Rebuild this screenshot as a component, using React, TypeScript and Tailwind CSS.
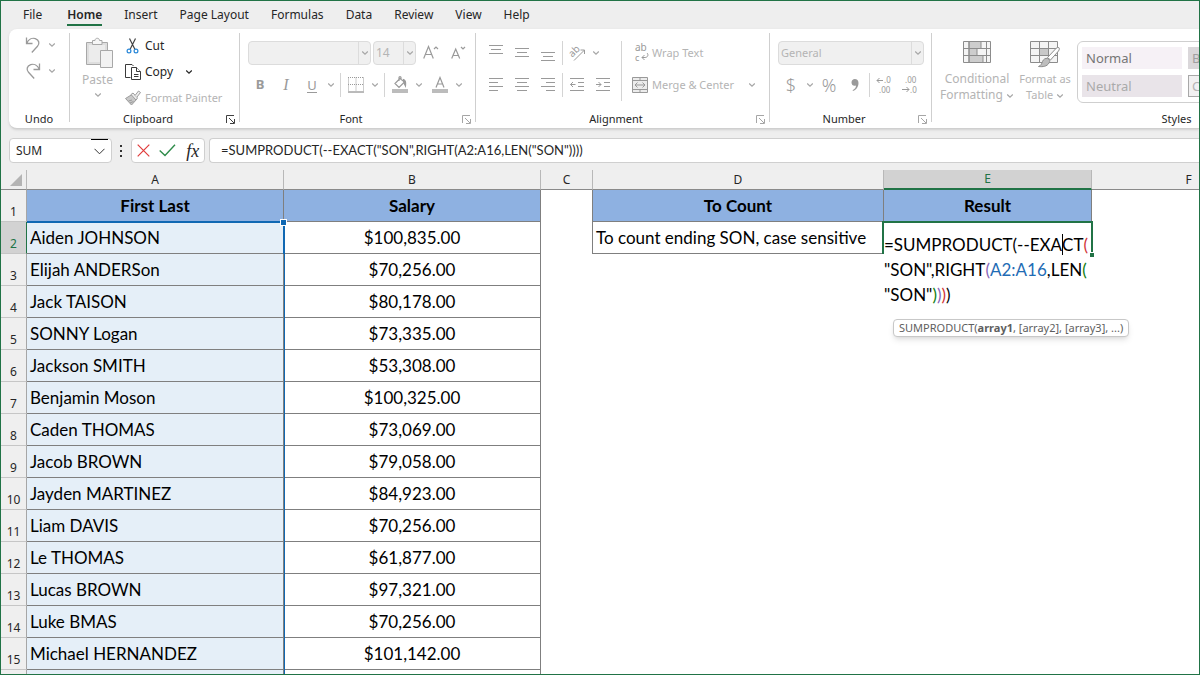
import type { ReactNode } from "react";

const tabs = ["File", "Home", "Insert", "Page Layout", "Formulas", "Data", "Review", "View", "Help"];

const people = [
  ["Aiden JOHNSON", "$100,835.00"],
  ["Elijah ANDERSon", "$70,256.00"],
  ["Jack TAISON", "$80,178.00"],
  ["SONNY Logan", "$73,335.00"],
  ["Jackson SMITH", "$53,308.00"],
  ["Benjamin Moson", "$100,325.00"],
  ["Caden THOMAS", "$73,069.00"],
  ["Jacob BROWN", "$79,058.00"],
  ["Jayden MARTINEZ", "$84,923.00"],
  ["Liam DAVIS", "$70,256.00"],
  ["Le THOMAS", "$61,877.00"],
  ["Lucas BROWN", "$97,321.00"],
  ["Luke BMAS", "$70,256.00"],
  ["Michael HERNANDEZ", "$101,142.00"],
  ["", ""],
];

const formula = '=SUMPRODUCT(--EXACT("SON",RIGHT(A2:A16,LEN("SON"))))';

function Chevron({ className = "text-[#a6a6a6]" }: { className?: string }) {
  return (
    <svg width="8" height="8" viewBox="0 0 8 8" fill="none" stroke="currentColor" strokeWidth="1.2" className={className}>
      <path d="M1.2 2.5 4 5.2l2.8-2.7" />
    </svg>
  );
}

function MoreButton({ label }: { label: string }) {
  return (
    <button aria-label={label} className="flex h-6 w-3 items-center justify-center">
      <Chevron />
    </button>
  );
}

function IconButton({ label, children }: { label: string; children: ReactNode }) {
  return (
    <button aria-label={label} className="flex h-6 w-[26px] items-center justify-center text-[#9a9a9a]">
      {children}
    </button>
  );
}

function Divider({ className = "mx-px" }: { className?: string }) {
  return <div className={`h-6 w-px bg-[#d4d4d4] ${className}`} />;
}

function Group({ title, width, launcher, children }: { title: string; width: string; launcher?: string; children: ReactNode }) {
  return (
    <section className={`flex shrink-0 flex-col pt-1 ${width}`}>
      <div className="flex h-[89px] flex-col border-r border-[#cfcfcf]">
        <div className="h-20 shrink-0">{children}</div>
        <div className={`grid shrink-0 items-center leading-3 ${launcher ? "grid-cols-[1fr_13px]" : "grid-cols-1"}`}>
          <h2 className="text-center text-[#262626]">{title}</h2>
          {launcher && (
            <button aria-label={title + " settings"} className={`w-3 ${launcher}`}>
              <svg width="9" height="9" viewBox="0 0 9 9" fill="none" stroke="currentColor">
                <path d="M.5 8V.5H8M3 3l5 5M8.5 4v4.5H4" />
              </svg>
            </button>
          )}
        </div>
      </div>
    </section>
  );
}

function Dropdown({ label, value, width }: { label: string; value: string; width: string }) {
  return (
    <div className={`relative h-6 ${width}`}>
      <select aria-label={label} disabled className="h-6 w-full appearance-none rounded border border-[#dcdcdc] bg-[#f0f0f0] pl-[2px] text-[#b4b4b4] opacity-100">
        <option>{value}</option>
      </select>
      <span className="pointer-events-none absolute top-px right-px flex h-[22px] w-3 items-center justify-center border-l border-[#dcdcdc]">
        <Chevron />
      </span>
    </div>
  );
}

function Lines({ d }: { d: string }) {
  return (
    <svg width="16" height="16" viewBox="0 0 16 16" fill="none" stroke="currentColor">
      <path d={d} />
    </svg>
  );
}

function UndoGroup() {
  return (
    <Group title="Undo" width="w-[61px]">
      <div className="flex flex-col gap-[2px] pl-[11px] text-[#a0a0a0]">
        <div className="flex">
          <IconButton label="Undo">
            <svg width="18" height="18" viewBox="0 0 18 18" fill="none" stroke="currentColor" strokeWidth="1.3">
              <path d="M2.5 1.5v6h6M2.8 7.2C4.5 3.5 8 1.5 11.3 2.6c4 1.3 4.5 5.2 2.2 7.6L7.8 16.5" />
            </svg>
          </IconButton>
          <MoreButton label="Undo history" />
        </div>
        <div className="flex">
          <IconButton label="Redo">
            <svg width="18" height="18" viewBox="0 0 18 18" fill="none" stroke="currentColor" strokeWidth="1.3">
              <path d="M15.5 1.5v6h-6M15.2 7.2C13.5 3.5 10 1.5 6.7 2.6c-4 1.3-4.5 5.2-2.2 7.6l5.7 6.3" />
            </svg>
          </IconButton>
          <MoreButton label="Redo history" />
        </div>
      </div>
    </Group>
  );
}

function ClipboardGroup() {
  return (
    <Group title="Clipboard" width="w-[170px]" launcher="text-[#404040]">
      <div className="flex">
        <button className="flex w-[55px] flex-col items-center pt-1 text-xs text-[#b4b4b4]">
          <svg width="30" height="32" viewBox="0 0 30 32" fill="#ececec" stroke="#a8a8a8" className="ml-1">
            <path d="M1.5 5.5h21v22h-21z" fill="#dedede" />
            <path d="M4 8h16v17H4z" stroke="none" />
            <path d="M7.5 7.5v-4H10c0-3 4.5-3 4.5 0h2.5v4z" fill="#f6f6f6" />
            <path d="M15.500 13.500h12v17h-12z" fill="#f2f2f2" />
          </svg>
          <span className="leading-[22px]">Paste</span>
          <Chevron />
        </button>
        <div className="flex flex-col gap-[2px] pt-px text-[#262626]">
          <button className="flex h-6 items-center gap-1 text-xs">
            <svg width="16" height="16" viewBox="0 0 16 16" fill="none" stroke="#444" strokeWidth="1.2">
              <path d="M4.5.5l5.500 11M10.500.5l-5.500 11" />
              <circle cx="4" cy="13" r="1.9" stroke="#2b88d8" />
              <circle cx="11" cy="13" r="1.9" stroke="#2b88d8" />
            </svg>
            Cut
          </button>
          <div className="flex">
            <button className="flex h-6 items-center gap-1 text-xs">
              <svg width="16" height="16" viewBox="0 0 16 16" fill="white" stroke="#3a3a3a">
                <path d="M5.5 13.5h-5v-13H7l1.500 1.500" />
                <path d="M6.5 3.5h5l4 4v8h-9z" />
                <path d="M11.5 3.5v4h4M9 10.5h4.500M9 12.500h4.500" />
              </svg>
              Copy
            </button>
            <button aria-label="Copy options" className="flex w-8 items-center justify-center">
              <Chevron className="text-[#262626]" />
            </button>
          </div>
          <button className="flex h-6 items-center gap-1 text-[#b4b4b4]">
            <svg width="16" height="16" viewBox="0 0 16 16" fill="#c8c8c8" stroke="#9c9c9c">
              <path d="M.5 8.5 7 4.500l4.500 5-5 5.500z" />
              <path d="M6 4.5 8 3l4.500 5-1.500 2z" fill="#eee" />
              <path d="M10 5.5 13.500 1l2 1.500L12 7" fill="#eee" />
              <path d="M3.5 11l3.500-1M5 13l3.500-1.500" />
            </svg>
            Format Painter
          </button>
        </div>
      </div>
    </Group>
  );
}

function FontGroup() {
  return (
    <Group title="Font" width="w-[236px]" launcher="text-[#a6a6a6]">
      <div className="flex flex-col gap-2 pt-2 pl-[7px]">
        <div className="flex items-center gap-[2px] pl-px">
          <Dropdown label="Font name" value="" width="w-[123px]" />
          <Dropdown label="Font size" value="14" width="w-[43px] text-xs" />
          <IconButton label="Increase font size">
            <svg width="16" height="16" viewBox="0 0 16 16" fill="none" stroke="currentColor" strokeWidth="1.2">
              <path d="M.7 13.500 5.500 1.500l4.800 12M2.500 9.500h6M11 4l2-2 2 2" />
            </svg>
          </IconButton>
          <IconButton label="Decrease font size">
            <svg width="16" height="16" viewBox="0 0 16 16" fill="none" stroke="currentColor" strokeWidth="1.2">
              <path d="M.7 13.500 4.700 4l4 9.500M2.200 10.500h5M10 2l2 2 2-2" />
            </svg>
          </IconButton>
        </div>
        <div className="flex items-center">
          <IconButton label="Bold"><b className="text-[13px]">B</b></IconButton>
          <IconButton label="Italic"><i className="font-[Liberation_Serif,serif] text-base">I</i></IconButton>
          <IconButton label="Underline"><span className="border-b border-current text-[13px] leading-[14px]">U</span></IconButton>
          <MoreButton label="Underline style" />
          <Divider className="mr-[2px] ml-[3px]" />
          <IconButton label="Borders">
            <svg width="16" height="16" viewBox="0 0 16 16" fill="none" stroke="currentColor">
              <path d="M.5.5v14M15.500.5v14M0 .5h16M8 .5v14M0 7.500h16" strokeDasharray="1 1" />
              <path d="M0 15h16" stroke="#777" />
            </svg>
          </IconButton>
          <MoreButton label="Border style" />
          <Divider className="mr-[2px] ml-[3px]" />
          <IconButton label="Fill color">
            <svg width="16" height="18" viewBox="0 0 16 18" fill="none" stroke="currentColor" strokeWidth="1.2">
              <path d="M0 13h16v4H0z" fill="#bcbcbc" stroke="none" />
              <path d="M8 2.500 3 7.500l4 4 5.500-5.500zM7 5V1.500c0-1.200 2-1.200 2 0V4" />
              <path d="M11.500 3.500c2 .5 2.500 3 2 6.500l-1.500-3z" fill="currentColor" />
            </svg>
          </IconButton>
          <MoreButton label="Fill color options" />
          <div className="w-[2px]" />
          <IconButton label="Font color">
            <svg width="16" height="18" viewBox="0 0 16 18" fill="none" stroke="currentColor" strokeWidth="1.2">
              <path d="M0 13h16v4H0z" fill="#bcbcbc" stroke="none" />
              <path d="M4 11.500 8 1.500l4 10M5.500 8h5" />
            </svg>
          </IconButton>
          <MoreButton label="Font color options" />
        </div>
      </div>
    </Group>
  );
}

function AlignmentGroup() {
  return (
    <Group title="Alignment" width="w-[294px]" launcher="text-[#a6a6a6]">
      <div className="flex pt-2 pl-[7px]">
        <div className="flex flex-col gap-2">
          <div className="flex items-center">
            <IconButton label="Top align"><Lines d="M1 .5h14M3 4.500h10M1 8.500h14" /></IconButton>
            <IconButton label="Middle align"><Lines d="M1 3.500h14M3 7.500h10M1 11.500h14" /></IconButton>
            <IconButton label="Bottom align"><Lines d="M1 7.500h14M3 11.500h10M1 15.500h14" /></IconButton>
            <Divider />
            <IconButton label="Orientation">
              <svg width="22" height="22" viewBox="0 0 22 22" fill="none" stroke="currentColor">
                <text x="3" y="12" transform="rotate(-45 9 10)" fontSize="10" fill="currentColor" stroke="none">ab</text>
                <path d="M8 18.500 18.500 8M14.500 8h4v4" />
              </svg>
            </IconButton>
            <MoreButton label="Orientation options" />
          </div>
          <div className="flex items-center">
            <IconButton label="Align left"><Lines d="M1 1.500h14M1 5.500h9M1 9.500h14M1 13.500h9" /></IconButton>
            <IconButton label="Center"><Lines d="M1 1.500h14M3 5.500h10M1 9.500h14M3 13.500h10" /></IconButton>
            <IconButton label="Align right"><Lines d="M1 1.500h14M6 5.500h9M1 9.500h14M6 13.500h9" /></IconButton>
            <Divider />
            <IconButton label="Decrease indent"><Lines d="M1 1.500h14M9 5.500h6M9 9.500h6M1 13.500h14M1.500 7.500h5M4 5 1.500 7.500 4 10" /></IconButton>
            <IconButton label="Increase indent"><Lines d="M1 1.500h14M9 5.500h6M9 9.500h6M1 13.500h14M1 7.500h5M3.500 5 6 7.500 3.500 10" /></IconButton>
          </div>
        </div>
        <div className="mr-[10px] ml-[5px] h-[60px] w-px bg-[#d4d4d4]" />
        <div className="flex flex-col gap-2 text-[#b4b4b4]">
          <button className="flex h-6 items-center gap-[3px]">
            <svg width="17" height="24" viewBox="0 0 17 24" fill="none" stroke="#999">
              <text x="3" y="10" fontSize="10" fill="#999" stroke="none">ab</text>
              <text x="3" y="20" fontSize="9" fill="#999" stroke="none">c</text>
              <path d="M15 12c2 2 .5 4.500-2 4.500h-3M12.500 14 10 16.500l2.500 2.500" />
            </svg>
            Wrap Text
          </button>
          <div className="flex">
            <button className="flex h-6 items-center gap-1">
              <svg width="16" height="16" viewBox="0 0 16 16" fill="none" stroke="#999">
                <path d="M.5.5h15v15H.5zM.5 3.500h15M.5 12.500h15M8 .5v3M8 12.500v3" fill="#ececec" />
                <path d="M3 8h10M5.500 5.500 3 8l2.500 2.500M10.500 5.500 13 8l-2.500 2.500" />
              </svg>
              Merge &amp; Center
            </button>
            <div className="w-3" />
            <MoreButton label="Merge options" />
          </div>
        </div>
      </div>
    </Group>
  );
}

function NumberGroup() {
  return (
    <Group title="Number" width="w-[162px]" launcher="text-[#a6a6a6]">
      <div className="flex flex-col gap-2 pt-2 pl-2">
        <Dropdown label="Number format" value="General" width="w-[146px]" />
        <div className="flex items-center">
          <IconButton label="Accounting format"><span className="text-lg font-light">$</span></IconButton>
          <MoreButton label="Currency options" />
          <IconButton label="Percent style"><span className="text-lg font-light">%</span></IconButton>
          <IconButton label="Comma style">
            <svg width="8" height="14" viewBox="0 0 8 14" fill="currentColor">
              <path d="M3.800 1C6 1 7.500 2.500 7.500 5c0 4-2.500 7-5.500 8l-.4-.8C3.800 11 5 9.500 5 7.500 2.500 8.500.5 7 .5 4.500.5 2.500 2 1 3.800 1z" />
            </svg>
          </IconButton>
          <Divider />
          <IconButton label="Increase decimal">
            <svg width="18" height="24" viewBox="0 0 18 24" fill="none" stroke="currentColor">
              <text x="9" y="10" fontSize="8" fill="currentColor" stroke="none">.0</text>
              <text x="4" y="20" fontSize="8" fill="currentColor" stroke="none">.00</text>
              <path d="M8 7.500H2M4.500 5 2 7.500 4.500 10" />
            </svg>
          </IconButton>
          <IconButton label="Decrease decimal">
            <svg width="18" height="24" viewBox="0 0 18 24" fill="none" stroke="currentColor">
              <text x="4" y="10" fontSize="8" fill="currentColor" stroke="none">.00</text>
              <text x="9" y="20" fontSize="8" fill="currentColor" stroke="none">.0</text>
              <path d="M1 16.500h7M5.500 14 8 16.500 5.500 19" />
            </svg>
          </IconButton>
        </div>
      </div>
    </Group>
  );
}

function StylesGroup() {
  return (
    <Group title="Styles" width="w-[490px]">
      <div className="flex pt-2 leading-4 text-[#b4b4b4]">
        <button className="flex w-[90px] flex-col items-center gap-2">
          <svg width="28" height="22" viewBox="0 0 28 22" fill="#f4f4f4" stroke="#8c8c8c">
            <path d="M.5.5h27v21H.5z" />
            <path d="M6 .5h12v7H6zM6 7.500h8v7H6zM6 14.500h14v7H6z" fill="#cdcdcd" />
            <path d="M0 7.500h28M0 14.500h28M6 0v22M23.500 0v22" fill="none" />
          </svg>
          <span className="text-xs leading-4">
            Conditional
            <br />
            Formatting <Chevron className="inline text-[#a6a6a6]" />
          </span>
        </button>
        <button className="flex w-[46px] flex-col items-center gap-2 whitespace-nowrap">
          <svg width="30" height="22" viewBox="0 0 30 22" fill="#f4f4f4" stroke="#8c8c8c" className="overflow-visible">
            <path d="M.5.5h27v21H.5z" />
            <path d="M9.500 7.500h9v7h-9z" fill="#c8c8c8" />
            <path d="M0 7.500h28M0 14.500h28M9.500 0v22M18.500 0v22" fill="none" />
            <path d="M28 6.500c2 0 1.500 2 .5 3.500l-8 9-3-2.500 8-8.500c.8-.9 1.700-1.500 2.500-1.500z" fill="#fff" />
            <path d="M17.500 17.500c2 .5 3 2.500 1.500 4.500-2 3.500-6 4-10.500 3.500 2.500-1 3-2.500 4-5 1-2.500 3-3.500 5-3z" fill="#bdbdbd" />
          </svg>
          <span>
            Format as
            <br />
            Table <Chevron className="inline text-[#a6a6a6]" />
          </span>
        </button>
        <div className="ml-[9px] grid h-[62px] flex-1 grid-cols-[100px_100px] content-center gap-[6px] rounded-md border border-[#cfcfcf] pl-1 text-[13px]">
          <button className="h-[22px] bg-[#f6f1f6] pl-1 text-left text-[#757575]">Normal</button>
          <button className="h-[22px] bg-[#dad7da] pl-1 text-left text-[#a0a0a0]">Bad</button>
          <button className="h-[22px] bg-[#e9e4e9] pl-1 text-left text-[#aaa]">Neutral</button>
          <button className="h-[22px] border border-[#a8a8a8] bg-[#f1f0f1] pl-[3px] text-left leading-5 text-[#b4b4b4]">Calculation</button>
        </div>
      </div>
    </Group>
  );
}

function FormulaBar() {
  return (
    <div className="mt-[9px] flex h-[25px] items-stretch pl-2 text-[#262626]">
      <div className="flex w-[103px] rounded border border-[#cfcfcf] bg-white">
        <input aria-label="Name box" defaultValue="SUM" className="w-[81px] pl-[6px] outline-none" />
        <button aria-label="Named ranges" className="flex w-[17px] items-center justify-center border-t border-black">
          <svg width="11" height="7" viewBox="0 0 11 7" fill="none" stroke="#333">
            <path d="M.5.8l5 5 5-5" />
          </svg>
        </button>
      </div>
      <svg width="19" height="25" viewBox="0 0 19 25" fill="#333">
        <path d="M8 7h2v2H8zM8 12h2v2H8zM8 17h2v2H8z" />
      </svg>
      <div className="flex w-[74px] items-center justify-around rounded border border-[#cfcfcf] bg-white">
        <button aria-label="Cancel">
          <svg width="13" height="13" viewBox="0 0 13 13" fill="none" stroke="#e03c3c" strokeWidth="1.2">
            <path d="M.7.7l11.600 11.600M12.300.7.7 12.300" />
          </svg>
        </button>
        <button aria-label="Enter">
          <svg width="17" height="13" viewBox="0 0 17 13" fill="none" stroke="#2e8b4a" strokeWidth="1.4">
            <path d="M.7 6.500 6 11.500 16 .8" />
          </svg>
        </button>
        <button aria-label="Insert function" className="font-[Liberation_Serif,serif] text-lg leading-5 italic">fx</button>
      </div>
      <input
        aria-label="Formula bar"
        defaultValue={formula}
        className="ml-1 flex-1 rounded-l border border-r-0 border-[#cfcfcf] bg-white pl-[11px] font-[Lato,sans-serif] text-[13px] outline-none"
      />
    </div>
  );
}

function CellEditor() {
  return (
    <>
      <div className="pointer-events-none absolute -top-px -left-[2px] h-[33px] w-[211px] border-2 border-b-0 border-[#217346]" />
      <div className="absolute top-[30px] -right-[2px] size-[5px] border-t border-l border-white bg-[#217346]" />
      <div role="textbox" aria-label="Cell E2" className="absolute top-[10px] left-0 w-[208px] text-left leading-[25px] whitespace-nowrap">
        =SUMPRODUCT(--EXA<span className="-mr-px border-l border-black" />CT<span className="text-[#d13438]">(</span>
        <br />
        "SON",RIGHT<span className="text-[#8764b8]">(</span>
        <span className="text-[#1f6cb5]">A2:A16</span>,LEN<span className="text-[#107c10]">(</span>
        <br />
        "SON"<span className="text-[#107c10]">)</span>
        <span className="text-[#8764b8]">)</span>
        <span className="text-[#d13438]">)</span>)
      </div>
      <div
        role="tooltip"
        className="absolute top-[97px] left-[9px] rounded border border-[#c8c8c8] bg-white px-[5px] font-[Noto_Sans,sans-serif] text-[11px] leading-4 whitespace-nowrap text-[#5e5e5e] shadow-md"
      >
        SUMPRODUCT(<b>array1</b>, [array2], [array3], ...)
      </div>
    </>
  );
}

function Sheet() {
  const colHead = "border-r border-b border-[#8a8a8a] border-r-[#b8b8b8] font-normal";
  const titleCell = "border-r border-b border-[#7f7f7f] bg-[#8eb1e1] pt-[2px] font-bold";
  const rowHead = "border-r border-b border-b-[#c6c6c6] text-center align-bottom font-[Noto_Sans,sans-serif] text-xs leading-[18px] font-normal";

  return (
    <table className="mt-[7px] w-[1285px] table-fixed border-separate border-spacing-0 bg-white font-[Lato,sans-serif] text-[17px] text-black">
      <colgroup>
        <col className="w-[26px]" />
        <col className="w-[257px]" />
        <col className="w-[257px]" />
        <col className="w-[52px]" />
        <col className="w-[291px]" />
        <col className="w-[208px]" />
        <col className="w-[194px]" />
      </colgroup>
      <thead>
        <tr className="h-5 bg-[#efefef] font-[Noto_Sans,sans-serif] text-xs leading-4 text-[#262626]">
          <th className={colHead}>
            <svg width="12" height="12" viewBox="0 0 12 12" fill="#b4b4b4" className="mr-1 ml-auto">
              <path d="M12 0v12H0z" />
            </svg>
          </th>
          <th className={colHead}>A</th>
          <th className={colHead}>B</th>
          <th className={colHead}>C</th>
          <th className={colHead}>D</th>
          <th className="border-r border-b-2 border-r-[#b8b8b8] border-b-[#217346] bg-[#d2d2d2] font-normal text-[#217346]">E</th>
          <th className={colHead}>F</th>
        </tr>
      </thead>
      <tbody>
        <tr className="h-8">
          <th className={`border-r-[#a6a6a6] bg-[#efefef] text-[#262626] ${rowHead}`}>1</th>
          <th className={titleCell}>First Last</th>
          <th className={titleCell}>Salary</th>
          <td className="border-r border-[#7f7f7f]" />
          <th className={titleCell}>To Count</th>
          <th className={titleCell}>Result</th>
          <td />
        </tr>
        {people.map(([name, salary], i) => (
          <tr key={i} className="h-8">
            <th className={`${rowHead} ${i === 0 ? "border-r-[#217346] bg-[#d2d2d2] text-[#217346]" : "border-r-[#a6a6a6] bg-[#efefef] text-[#262626]"}`}>{i + 2}</th>
            <td className="relative border-r border-b border-[#7f7f7f] bg-[#e5eff8] pt-[2px] pl-[3px]">
              {name}
              {i === 0 && (
                <>
                  {/* A2:A16 reference outline */}
                  <div className="pointer-events-none absolute -top-px -right-[2px] left-0 h-[480px] border-2 border-l-0 border-[#1068b3]" />
                  <div className="absolute -top-[3px] -right-[4px] size-[7px] border border-white bg-[#1068b3]" />
                </>
              )}
            </td>
            <td className="border-r border-b border-[#7f7f7f] pt-[2px] text-center">{salary}</td>
            {i === 0 ? (
              <>
                <td className="border-r border-[#7f7f7f]" />
                <td className="border-b border-[#7f7f7f] pt-[2px] pl-[3px] whitespace-nowrap">To count ending SON, case sensitive</td>
                <td className="relative">
                  <CellEditor />
                </td>
                <td />
              </>
            ) : (
              <td colSpan={4} />
            )}
          </tr>
        ))}
      </tbody>
    </table>
  );
}

export default function App() {
  return (
    <div className="h-screen overflow-hidden border border-[#217346] bg-[#eeeeee] font-[Noto_Sans,sans-serif] text-xs">
      <nav className="flex h-7 items-start pl-[11px] text-[#262626]">
        {tabs.map((tab) => (
          <button key={tab} className="px-[11px] pt-[5px] first:pr-[14px]">
            <span className={tab === "Home" ? "block border-b-2 border-[#217346] leading-[18px] font-semibold" : "block leading-[18px]"}>{tab}</span>
          </button>
        ))}
      </nav>
      <div className="ml-2 flex h-[100px] overflow-hidden rounded-l-lg border-b border-[#cfcfcf] bg-white text-[11px] shadow-sm">
        <UndoGroup />
        <ClipboardGroup />
        <FontGroup />
        <AlignmentGroup />
        <NumberGroup />
        <StylesGroup />
      </div>
      <FormulaBar />
      <Sheet />
    </div>
  );
}
